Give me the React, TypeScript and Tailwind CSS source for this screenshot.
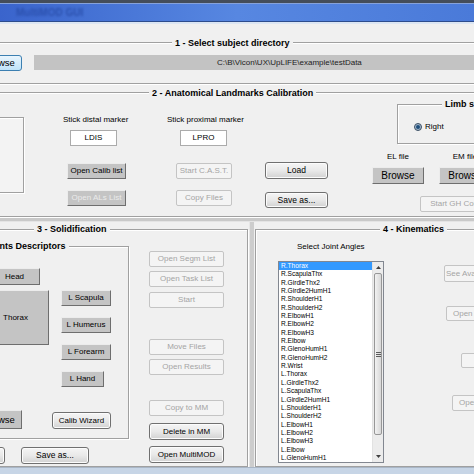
import React from "react";

const flat =
  "flex items-center justify-center shrink-0 bg-[#c4c4c4] border border-t-[#ececec] border-l-[#ececec] border-r-[#6e6e6e] border-b-[#6e6e6e] leading-none whitespace-nowrap overflow-hidden";
const light =
  "flex items-center shrink-0 bg-[#f4f4f4] border border-[#c4c4c4] rounded-[2px] text-[8px] leading-none text-[#a4a4a4] whitespace-nowrap overflow-hidden";
const glossy =
  "flex items-center justify-center shrink-0 rounded-[3px] border border-[#707070] bg-linear-to-b from-[#f5f5f5] via-[#e9e9e9] to-[#d2d2d2] shadow-[inset_0_0_0_1px_#fcfcfc] leading-none text-black whitespace-nowrap overflow-hidden";
const field =
  "flex items-center justify-center shrink-0 bg-white border border-[#ababab] text-[8px] leading-none";
const frame = "border border-[#a0a0a0] shadow-[inset_1px_1px_0_#ffffff,1px_1px_0_#ffffff]";
const line = "h-[2px] border-t border-b border-t-[#a0a0a0] border-b-white";
const legend =
  "self-start shrink-0 -mt-[6px] px-[3px] bg-[#f0f0f0] text-[9px] font-bold leading-[10px] whitespace-nowrap";
const label = "text-[8px] leading-[10px] whitespace-nowrap";

const angles = [
  "R.Thorax",
  "R.ScapulaThx",
  "R.GirdleThx2",
  "R.Girdle2HumH1",
  "R.ShoulderH1",
  "R.ShoulderH2",
  "R.ElbowH1",
  "R.ElbowH2",
  "R.ElbowH3",
  "R.Elbow",
  "R.GlenoHumH1",
  "R.GlenoHumH2",
  "R.Wrist",
  "L.Thorax",
  "L.GirdleThx2",
  "L.ScapulaThx",
  "L.Girdle2HumH1",
  "L.ShoulderH1",
  "L.ShoulderH2",
  "L.ElbowH1",
  "L.ElbowH2",
  "L.ElbowH3",
  "L.Elbow",
  "L.GlenoHumH1",
];

export default function App() {
  return (
    <div className="w-[474px] h-[474px] overflow-hidden bg-[#f0f0f0] flex flex-col font-['Liberation_Sans',Arial,sans-serif] text-black select-none">
      {/* title bar */}
      <div className="h-[3px] shrink-0 bg-[#444d5a]" />
      <div className="h-[18px] shrink-0 flex items-center border-t border-[#86a2da] bg-linear-to-r from-[#3a64cc] via-[#5787e1] to-[#4a7ad9]">
        <span className="ml-[16px] text-[10px] font-bold text-[#2b50ad] blur-[1.2px]">MultiMOD GUI</span>
      </div>
      <div className="h-[1px] shrink-0 bg-[#2d4c8c]" />
      <div className="h-[2px] shrink-0 bg-[#dce6f3]" />

      {/* 1 - Select subject directory */}
      <div className="h-[61px] shrink-0 flex flex-col">
        <div className="mt-[14px] h-[10px] shrink-0 flex items-center">
          <div className={`w-[172px] shrink-0 ${line}`} />
          <span className="px-[3px] text-[9px] font-bold leading-[10px] whitespace-nowrap">
            1 - Select subject directory
          </span>
          <div className={`flex-1 ${line}`} />
        </div>
        <div className="mt-[7px] h-[16px] shrink-0 flex">
          <button
            type="button"
            className="ml-[-24px] w-[46px] h-[16px] shrink-0 rounded-[3px] border border-[#3c7fb1] bg-linear-to-b from-[#e9f5fd] to-[#bfe3f9] text-[9.5px] leading-none flex items-center justify-center"
          >
            Browse
          </button>
          <div className="ml-[12px] flex-1 h-[15px] bg-[#c3c3c3] pl-[183px] text-[8px] leading-[15px] text-[#222] whitespace-nowrap overflow-hidden">
            C:\B\Vicon\UX\UpLIFE\example\testData
          </div>
        </div>
        <div className={`mt-[12px] shrink-0 ${line}`} />
      </div>

      {/* 2 - Anatomical Landmarks Calibration */}
      <div className="h-[131px] shrink-0 flex flex-col">
        <div className="mt-[3px] h-[10px] shrink-0 flex items-center">
          <div className={`w-[149px] shrink-0 ${line}`} />
          <span className="px-[3px] text-[9px] font-bold leading-[10px] whitespace-nowrap">
            2 - Anatomical Landmarks Calibration
          </span>
          <div className={`flex-1 ${line}`} />
        </div>
        <div className="h-[118px] shrink-0 flex items-start">
          <div className={`ml-[-2px] mt-[19px] w-[26px] h-[76px] shrink-0 bg-[#f3f3f3] ${frame}`} />

          <div className="ml-[39px] w-[67px] shrink-0 flex flex-col items-start">
            <div className={`mt-[17px] ${label}`}>Stick distal marker</div>
            <div className={`mt-[5px] ml-[7px] w-[47px] h-[16px] ${field}`}>LDIS</div>
            <button type="button" className={`mt-[17px] ml-[4px] w-[59px] h-[16px] text-[8px] text-black ${flat}`}>
              Open Calib list
            </button>
            <button type="button" className={`mt-[11px] ml-[4px] w-[59px] h-[16px] text-[8px] text-[#ebebeb] ${flat}`}>
              Open ALs List
            </button>
          </div>

          <div className="ml-[37px] w-[80px] shrink-0 flex flex-col items-start">
            <div className={`mt-[17px] ${label}`}>Stick proximal marker</div>
            <div className={`mt-[5px] ml-[13px] w-[47px] h-[16px] ${field}`}>LPRO</div>
            <button type="button" className={`mt-[17px] ml-[9px] w-[56px] h-[16px] justify-center ${light}`}>
              Start C.A.S.T.
            </button>
            <button type="button" className={`mt-[11px] ml-[9px] w-[56px] h-[16px] justify-center ${light}`}>
              Copy Files
            </button>
          </div>

          <div className="ml-[18px] w-[63px] shrink-0 flex flex-col items-start">
            <button type="button" className={`mt-[64px] w-[63px] h-[17px] text-[8.5px] ${glossy}`}>
              Load
            </button>
            <button type="button" className={`mt-[13px] w-[63px] h-[16px] text-[8.5px] ${glossy}`}>
              Save as...
            </button>
          </div>

          <div className="ml-[44px] w-[150px] shrink-0 flex flex-col items-start">
            <div className={`ml-[25px] mt-[6px] w-[120px] h-[40px] shrink-0 flex flex-col ${frame}`}>
              <span className={`ml-[44px] ${legend}`}>Limb side</span>
              <div className="mt-[13px] ml-[16px] h-[10px] flex items-center gap-[3px]">
                <span className="w-[8px] h-[8px] rounded-full border border-[#3d4f63] bg-[#a3b9ce] flex items-center justify-center">
                  <span className="w-[4px] h-[4px] rounded-full bg-[#1f4e7a]" />
                </span>
                <span className={label}>Right</span>
              </div>
            </div>
            <div className="mt-[8px] flex gap-[15px]">
              <div className="w-[52px] shrink-0 flex flex-col items-center">
                <div className={`h-[10px] ${label}`}>EL file</div>
                <button type="button" className={`mt-[5px] w-[52px] h-[17px] text-[10px] ${flat}`}>
                  Browse
                </button>
              </div>
              <div className="w-[52px] shrink-0 flex flex-col items-center">
                <div className={`h-[10px] ${label}`}>EM file</div>
                <button type="button" className={`mt-[5px] w-[52px] h-[17px] text-[10px] ${flat}`}>
                  Browse
                </button>
              </div>
            </div>
            <button type="button" className={`mt-[12px] ml-[48px] w-[99px] h-[16px] justify-center ${light}`}>
              Start GH Computation
            </button>
          </div>
        </div>
      </div>

      {/* separator */}
      <div className="h-[1px] shrink-0 bg-[#a0a0a0]" />
      <div className="h-[1px] shrink-0 bg-white" />
      <div className="h-[3px] shrink-0 bg-[#c9c9c9]" />
      <div className="h-[1px] shrink-0 bg-[#e4e4e4]" />

      {/* lower panels */}
      <div className="h-[245px] shrink-0 flex">
        {/* 3 - Solidification */}
        <div className="w-[249px] shrink-0 pt-[7px]">
          <div className={`ml-[-2px] w-[250px] h-[238px] flex flex-col ${frame}`}>
            <span className={`ml-[35px] ${legend}`}>3 - Solidification</span>
            <div className="flex items-start">
              <div className="w-[130px] shrink-0 flex flex-col">
                <div className={`mt-[12px] ml-[-39px] w-[169px] h-[193px] shrink-0 flex flex-col ${frame}`}>
                  <span className={`ml-[6px] ${legend}`}>Segments Descriptors</span>
                  <div className="flex items-start">
                    <div className="ml-[21px] shrink-0 flex flex-col items-start">
                      <button type="button" className={`mt-[17px] ml-[7px] w-[51px] h-[17px] text-[8px] ${flat}`}>
                        Head
                      </button>
                      <button type="button" className={`mt-[5px] w-[67px] h-[55px] text-[8px] ${flat}`}>
                        Thorax
                      </button>
                    </div>
                    <div className="ml-[12px] shrink-0 flex flex-col items-start">
                      <button type="button" className={`mt-[39px] w-[50px] h-[16px] text-[8px] ${flat}`}>
                        L Scapula
                      </button>
                      <button type="button" className={`mt-[11px] w-[50px] h-[16px] text-[8px] ${flat}`}>
                        L Humerus
                      </button>
                      <button type="button" className={`mt-[11px] w-[50px] h-[16px] text-[8px] ${flat}`}>
                        L Forearm
                      </button>
                      <button type="button" className={`mt-[11px] w-[43px] h-[16px] text-[8px] ${flat}`}>
                        L Hand
                      </button>
                    </div>
                  </div>
                  <div className="mt-[23px] flex items-start">
                    <button type="button" className={`ml-[15px] w-[46px] h-[19px] text-[9.5px] ${flat}`}>
                      Browse
                    </button>
                    <button type="button" className={`ml-[30px] mt-[2px] w-[59px] h-[17px] text-[8px] ${glossy}`}>
                      Calib Wizard
                    </button>
                  </div>
                </div>
                <div className="mt-[8px] flex items-start">
                  <button type="button" className={`ml-[-44px] w-[50px] h-[17px] text-[8.5px] ${glossy}`}>
                    Load
                  </button>
                  <button type="button" className={`ml-[16px] w-[68px] h-[17px] text-[8.5px] ${glossy}`}>
                    Save as...
                  </button>
                </div>
              </div>

              <div className="ml-[20px] w-[75px] shrink-0 flex flex-col">
                <button type="button" className={`mt-[17px] w-[75px] h-[16px] justify-center ${light}`}>
                  Open Segm List
                </button>
                <button type="button" className={`mt-[4px] w-[75px] h-[16px] justify-center ${light}`}>
                  Open Task List
                </button>
                <button type="button" className={`mt-[5px] w-[75px] h-[16px] justify-center ${light}`}>
                  Start
                </button>
                <button type="button" className={`mt-[31px] w-[75px] h-[16px] justify-center ${light}`}>
                  Move Files
                </button>
                <button type="button" className={`mt-[4px] w-[75px] h-[16px] justify-center ${light}`}>
                  Open Results
                </button>
                <button type="button" className={`mt-[25px] w-[75px] h-[16px] justify-center ${light}`}>
                  Copy to MM
                </button>
                <button type="button" className={`mt-[7px] w-[75px] h-[17px] text-[8px] ${glossy}`}>
                  Delete in MM
                </button>
                <button type="button" className={`mt-[6px] w-[75px] h-[17px] text-[8px] ${glossy}`}>
                  Open MultiMOD
                </button>
              </div>
            </div>
          </div>
        </div>

        <div className="w-[5px] shrink-0 bg-[#cdcdcd] border-l border-[#e6e6e6]" />

        {/* 4 - Kinematics */}
        <div className="flex-1 pt-[7px] pl-[1px]">
          <div className={`w-[240px] h-[238px] flex flex-col ${frame}`}>
            <span className={`ml-[124px] ${legend}`}>4 - Kinematics</span>
            <div className="flex items-start">
              <div className="ml-[22px] w-[106px] shrink-0 flex flex-col items-start">
                <div className={`mt-[8px] ml-[19px] ${label}`}>Select Joint Angles</div>
                <div className="mt-[9px] w-[106px] h-[202px] shrink-0 flex bg-white border border-[#828790]">
                  <div className="flex-1 flex flex-col overflow-hidden">
                    {angles.map((a, i) => (
                      <div
                        key={a}
                        className={
                          i === 0
                            ? "h-[8.35px] shrink-0 pl-[2px] text-[6.6px] leading-[8.35px] whitespace-nowrap bg-[#3399ff] text-white"
                            : "h-[8.35px] shrink-0 pl-[2px] text-[6.6px] leading-[8.35px] whitespace-nowrap text-black"
                        }
                      >
                        {a}
                      </div>
                    ))}
                  </div>
                  <div className="w-[11px] shrink-0 flex flex-col bg-[#ececec] border-l border-[#e2e2e2]">
                    <div className="h-[11px] shrink-0 flex items-center justify-center">
                      <svg width="5" height="3" viewBox="0 0 5 3">
                        <polygon points="0,3 2.5,0 5,3" fill="#3f3f3f" />
                      </svg>
                    </div>
                    <div className="h-[162px] shrink-0 mx-[1px] rounded-[2px] border border-[#979797] bg-linear-to-r from-[#f2f2f2] to-[#d8d8d8] flex flex-col items-center justify-center gap-[1px]">
                      <div className="w-[5px] h-[1px] bg-[#5c5c5c]" />
                      <div className="w-[5px] h-[1px] bg-[#5c5c5c]" />
                      <div className="w-[5px] h-[1px] bg-[#5c5c5c]" />
                    </div>
                    <div className="flex-1" />
                    <div className="h-[11px] shrink-0 flex items-center justify-center">
                      <svg width="5" height="3" viewBox="0 0 5 3">
                        <polygon points="0,0 5,0 2.5,3" fill="#3f3f3f" />
                      </svg>
                    </div>
                  </div>
                </div>
              </div>
              <div className="shrink-0 flex flex-col items-start">
                <button type="button" className={`mt-[31px] ml-[60px] w-[70px] h-[17px] justify-start pl-[1px] ${light} text-[#8c8c8c]`}>
                  See Available Angles
                </button>
                <button type="button" className={`mt-[24px] ml-[62px] w-[70px] h-[15px] justify-start pl-[6px] ${light}`}>
                  Open Angles List
                </button>
                <button type="button" className={`mt-[32px] ml-[77px] w-[60px] h-[15px] justify-start pl-[16px] ${light}`}>
                  Plot
                </button>
                <button type="button" className={`mt-[27px] ml-[68px] w-[70px] h-[16px] justify-start pl-[6px] ${light}`}>
                  Open Results
                </button>
              </div>
            </div>
          </div>
        </div>
      </div>

      {/* window bottom border */}
      <div className="h-[7px] shrink-0 bg-[#c7d5e6] border-t border-[#a9b6c6]" />
    </div>
  );
}
